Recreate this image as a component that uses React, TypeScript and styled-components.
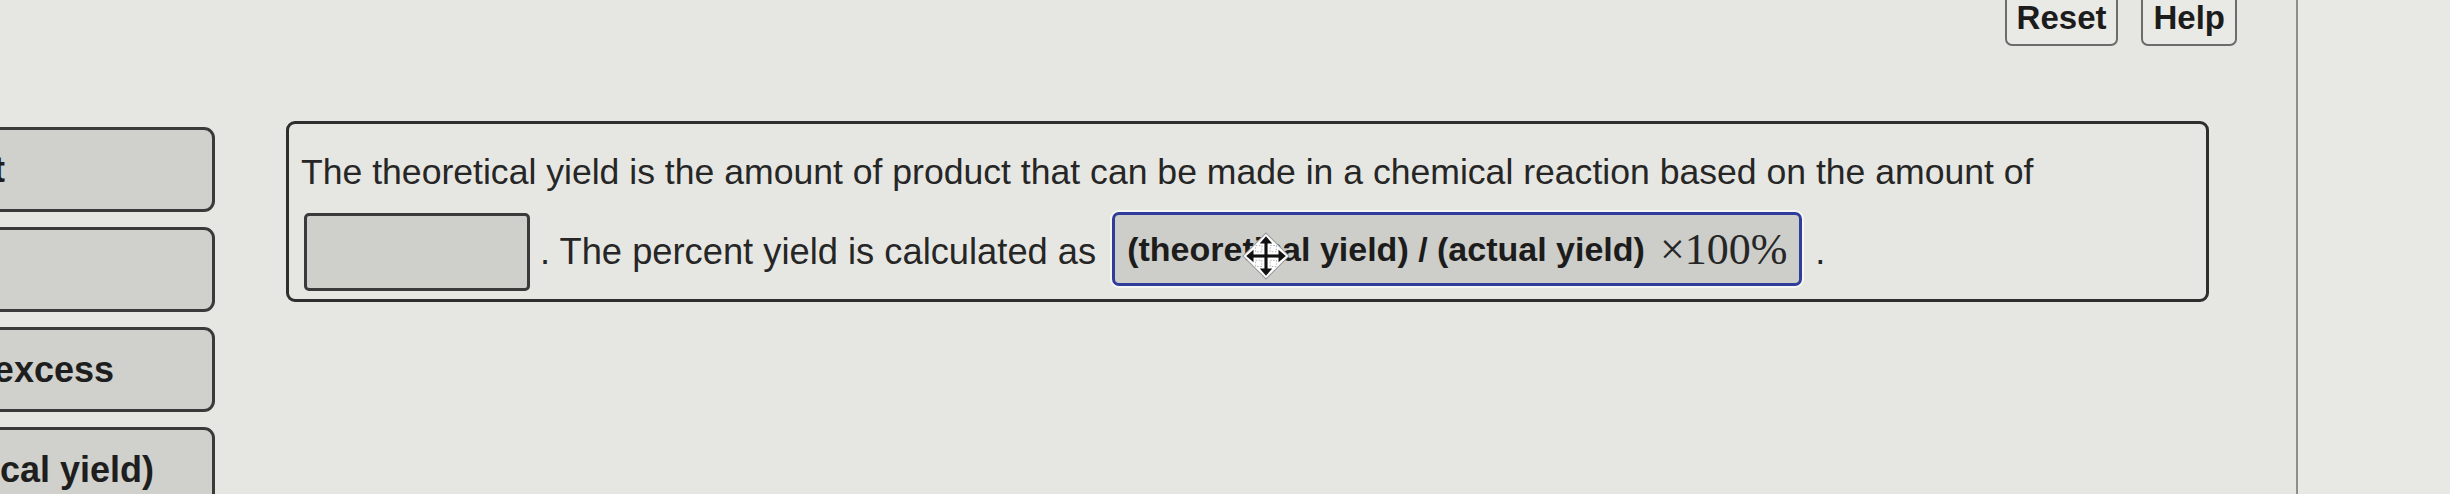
import styled, { createGlobalStyle } from "styled-components";

const GlobalStyle = createGlobalStyle`
  html, body {
    margin: 0;
    padding: 0;
  }
  body {
    background: #e6e6e2;
    font-family: "Liberation Sans", Arial, sans-serif;
    color: #242424;
  }
`;

const Page = styled.div`
  display: flex;
  width: 2450px;
  height: 494px;
  overflow: hidden;
  background: #e6e6e2;
`;

const Workspace = styled.div`
  width: 2296px;
  flex-shrink: 0;
  display: flex;
  flex-direction: column;
`;

const Toolbar = styled.div`
  display: flex;
  justify-content: flex-end;
  gap: 23px;
  margin-top: -12px;
  padding-right: 59px;
`;

const ToolButton = styled.button`
  box-sizing: border-box;
  height: 58px;
  padding: 9px 10px 0;
  display: flex;
  align-items: flex-start;
  border: 2px solid #6c6c6a;
  border-radius: 7px;
  background: #e9e9e5;
  font-family: "Liberation Sans", Arial, sans-serif;
  font-weight: 700;
  font-size: 33px;
  line-height: 38px;
  color: #1c1c1c;
`;

const Content = styled.div`
  display: flex;
  align-items: flex-start;
  gap: 71px;
  margin-top: 75px;
`;

const TileColumn = styled.div`
  width: 455px;
  margin-left: -240px;
  padding-top: 6px;
  display: flex;
  flex-direction: column;
  gap: 15px;
  flex-shrink: 0;
`;

const Tile = styled.div<{ $trail: number }>`
  box-sizing: border-box;
  height: 85px;
  display: flex;
  align-items: center;
  justify-content: flex-end;
  padding-right: ${(p) => p.$trail}px;
  border: 3px solid #3a3a3a;
  border-radius: 11px;
  background: #d0d0cc;
  font-weight: 700;
  font-size: 36px;
  color: #1e1e1e;
  white-space: nowrap;
`;

const QuestionBox = styled.div`
  box-sizing: border-box;
  width: 1923px;
  flex-shrink: 0;
  padding: 26px 14px 8px 12px;
  border: 3px solid #2e2e2e;
  border-radius: 9px;
  font-size: 35.6px;
  color: #262626;
`;

const Line = styled.div`
  line-height: 44px;
  white-space: nowrap;
`;

const AnswerRow = styled.div`
  display: flex;
  align-items: center;
  height: 78px;
  margin-top: 19px;
  font-size: 36.3px;
  white-space: nowrap;
`;

const BlankSlot = styled.div`
  box-sizing: border-box;
  width: 226px;
  height: 78px;
  margin-left: 3px;
  border: 3px solid #3a3a3a;
  border-radius: 5px;
  background: #cfcfcb;
`;

const Phrase = styled.span<{ $gap: number }>`
  margin-left: ${(p) => p.$gap}px;
`;

const FilledSlot = styled.div`
  position: relative;
  box-sizing: border-box;
  width: 690px;
  height: 74px;
  margin-left: 16px;
  margin-top: -6px;
  padding: 0 12px;
  display: flex;
  align-items: center;
  border: 3px solid #2f3c9c;
  border-radius: 7px;
  box-shadow: 0 0 0 2px #f6f6f3;
  background: #cdcdc9;
`;

const SlotText = styled.span`
  font-weight: 700;
  font-size: 34px;
  color: #1c1c1c;
`;

const MathText = styled.span`
  margin-left: 15px;
  font-family: "Liberation Serif", "Times New Roman", serif;
  font-size: 44px;
  color: #262626;
`;

const MoveCursor = styled.svg`
  position: absolute;
  left: 126px;
  top: 16px;
  width: 50px;
  height: 50px;
`;

const SidePanel = styled.div`
  flex: 1;
  border-left: 2px solid #8e8e8c;
  background: #e8e8e4;
`;

export default function App() {
  return (
    <>
      <GlobalStyle />
      <Page>
        <Workspace>
          <Toolbar>
            <ToolButton>Reset</ToolButton>
            <ToolButton>Help</ToolButton>
          </Toolbar>
          <Content>
            <TileColumn>
              <Tile $trail={207}>limiting reactant</Tile>
              <Tile $trail={240}>product</Tile>
              <Tile $trail={98}>reactant in excess</Tile>
              <Tile $trail={58}>(theoretical yield)</Tile>
            </TileColumn>
            <QuestionBox>
              <Line>
                The theoretical yield is the amount of product that can be made in a chemical reaction based on the
                amount of
              </Line>
              <AnswerRow>
                <BlankSlot />
                <Phrase $gap={10}>. The percent yield is calculated as</Phrase>
                <FilledSlot>
                  <SlotText>(theoretical yield) / (actual yield)</SlotText>
                  <MathText>×100%</MathText>
                  <MoveCursor viewBox="0 0 48 48">
                    <polygon points="24,2 46,24 24,46 2,24" fill="#ffffff" stroke="#9a9a9a" strokeWidth="1" />
                    <g fill="none" stroke="#b5b5b5" strokeWidth="1" strokeDasharray="1.5 1.5">
                      <rect x="14" y="14" width="6" height="6" />
                      <rect x="28" y="14" width="6" height="6" />
                      <rect x="14" y="28" width="6" height="6" />
                      <rect x="28" y="28" width="6" height="6" />
                    </g>
                    <g fill="#111111">
                      <rect x="22.5" y="10" width="3" height="28" />
                      <rect x="10" y="22.5" width="28" height="3" />
                      <polygon points="24,5 30,12 18,12" />
                      <polygon points="24,43 30,36 18,36" />
                      <polygon points="5,24 12,18 12,30" />
                      <polygon points="43,24 36,18 36,30" />
                    </g>
                  </MoveCursor>
                </FilledSlot>
                <Phrase $gap={13}>.</Phrase>
              </AnswerRow>
            </QuestionBox>
          </Content>
        </Workspace>
        <SidePanel />
      </Page>
    </>
  );
}
